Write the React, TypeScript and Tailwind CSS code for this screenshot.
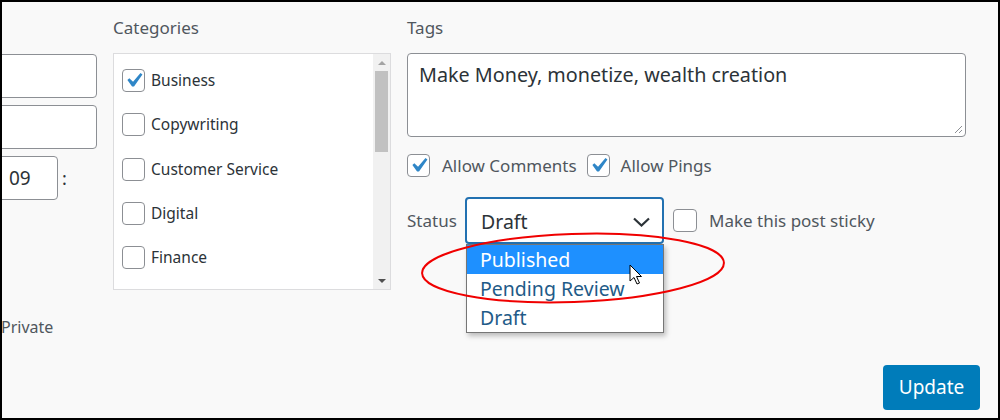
import React from 'react';

function CheckBox({ checked = false, className = '' }: { checked?: boolean; className?: string }) {
  return (
    <span className={`relative inline-block shrink-0 rounded-[4px] border border-[#8c8f94] bg-white ${className}`}>
      {checked && (
        <svg viewBox="0 0 20 20" className="absolute -left-[4px] -top-[4px] h-[29px] w-[29px] fill-[#2f86c7]">
          <path d="M14.83 4.89l1.34.94-5.81 8.38H9.02L5.78 9.67l1.34-1.25 2.57 2.4z" />
        </svg>
      )}
    </span>
  );
}

const categories = [
  { name: 'Business', checked: true },
  { name: 'Copywriting', checked: false },
  { name: 'Customer Service', checked: false },
  { name: 'Digital', checked: false },
  { name: 'Finance', checked: false },
];

export default function App() {
  return (
    <div className="relative flex h-[420px] w-[1000px] flex-col overflow-hidden border-2 border-black bg-[#f9f9f9] font-['Noto_Sans',sans-serif] text-[#50575e]">
      <div className="flex items-start pt-[14px]">
        {/* left column, cut off by the frame */}
        <div className="flex w-[95px] shrink-0 flex-col gap-[7px] pt-[38px]">
          <div className="-ml-[10px] h-[44px] w-[105px] rounded-[4px] border border-[#8c8f94] bg-white" />
          <div className="-ml-[10px] h-[44px] w-[105px] rounded-[4px] border border-[#8c8f94] bg-white" />
          <div className="flex items-center">
            <div className="-ml-[10px] flex h-[44px] w-[66px] items-center rounded-[4px] border border-[#8c8f94] bg-white pl-[16px] text-[19px] text-[#2c3338]">
              09
            </div>
            <span className="ml-[4px] text-[18px] text-[#2c3338]">:</span>
          </div>
        </div>

        {/* categories */}
        <div className="ml-[16px] w-[278px] shrink-0">
          <div className="mb-[13px] h-[24px] text-[17px] leading-[24px]">Categories</div>
          <div className="flex h-[237px] border border-[#dcdcde] bg-white">
            <div className="flex flex-1 flex-col gap-[21.25px] pl-[8px] pt-[15px]">
              {categories.map((c) => (
                <div key={c.name} className="flex h-[23px] items-center">
                  <CheckBox checked={c.checked} className="h-[23px] w-[23px]" />
                  <span className="ml-[6px] text-[15.5px] leading-[23px] text-[#2c3338]">{c.name}</span>
                </div>
              ))}
            </div>
            <div className="flex w-[17px] flex-col bg-[#f1f1f1]">
              <div className="flex h-[17px] items-center justify-center">
                <span className="h-0 w-0 border-x-[4px] border-b-[4px] border-x-transparent border-b-[#a3a3a3]" />
              </div>
              <div className="mx-[2px] h-[81px] bg-[#c1c1c1]" />
              <div className="flex-1" />
              <div className="flex h-[17px] items-center justify-center">
                <span className="h-0 w-0 border-x-[4px] border-t-[4px] border-x-transparent border-t-[#505050]" />
              </div>
            </div>
          </div>
        </div>

        {/* tags and options */}
        <div className="ml-[16px] w-[559px] shrink-0">
          <div className="mb-[13px] h-[24px] text-[17px] leading-[24px]">Tags</div>
          <div className="relative h-[84px] rounded-[4px] border border-[#8c8f94] bg-white pl-[11px] pt-[8px] text-[19.75px] leading-[26px] text-[#2c3338]">
            Make Money, monetize, wealth creation
            <svg viewBox="0 0 10 10" className="absolute bottom-[2px] right-[2px] h-[10px] w-[10px] stroke-[#8c8f94]">
              <path d="M9 2L2 9M9 6L6 9" strokeWidth="1" />
            </svg>
          </div>

          <div className="mt-[17px] flex h-[23px] items-center">
            <CheckBox checked className="h-[23px] w-[23px]" />
            <span className="ml-[12px] text-[17px]">Allow Comments</span>
            <CheckBox checked className="ml-[10px] h-[23px] w-[23px]" />
            <span className="ml-[11px] text-[17px]">Allow Pings</span>
          </div>

          <div className="mt-[20px] flex items-center">
            <span className="w-[58px] shrink-0 text-[17px]">Status</span>
            <div className="relative">
              <div className="flex h-[47px] w-[199px] items-center justify-between rounded-[4px] border-2 border-[#2271b1] bg-white pl-[14px] pr-[12px] pt-[2px] text-[19.5px] text-[#2c3338]">
                <span>Draft</span>
                <svg viewBox="0 0 17 10" className="h-[10px] w-[17px] fill-none stroke-[#2c3338]">
                  <path d="M1 1.5L8.5 8.5L16 1.5" strokeWidth="2.2" />
                </svg>
              </div>
              <div className="absolute left-[1px] top-[47px] z-10 w-[198px] border border-[#767676] bg-white text-[19.5px] leading-[29px] text-[#1f5b88] shadow-[2px_3px_5px_rgba(0,0,0,0.25)]">
                <div className="h-[29px] bg-[#1e90ff] pl-[13px] text-white">Published</div>
                <div className="h-[29px] pl-[13px]">Pending Review</div>
                <div className="h-[29px] pl-[13px]">Draft</div>
              </div>
            </div>
            <CheckBox className="ml-[9px] h-[23px] w-[24px]" />
            <span className="ml-[12px] text-[17px]">Make this post sticky</span>
          </div>
        </div>
      </div>

      <div className="-ml-[1px] mt-[25px] h-[24px] text-[16px] leading-[24px]">Private</div>

      <div className="mt-[26px] flex justify-end pr-[18px]">
        <button className="h-[45px] w-[97px] rounded-[4px] bg-[#007cba] text-[19px] text-white">Update</button>
      </div>

      {/* annotation: red ellipse and mouse pointer */}
      <svg className="pointer-events-none absolute left-0 top-0 z-20 h-[420px] w-[1000px]" viewBox="0 0 1000 420">
        <ellipse cx="571" cy="266" rx="151" ry="34" transform="rotate(-2 571 266)" fill="none" stroke="#f00000" strokeWidth="2" />
        <path
          d="M628 263 L628 279 L632 275.5 L635 282 L637.5 281 L634.5 274.5 L639.5 274.5 Z"
          fill="#fff"
          stroke="#000"
          strokeWidth="1"
          strokeLinejoin="round"
        />
      </svg>
    </div>
  );
}
